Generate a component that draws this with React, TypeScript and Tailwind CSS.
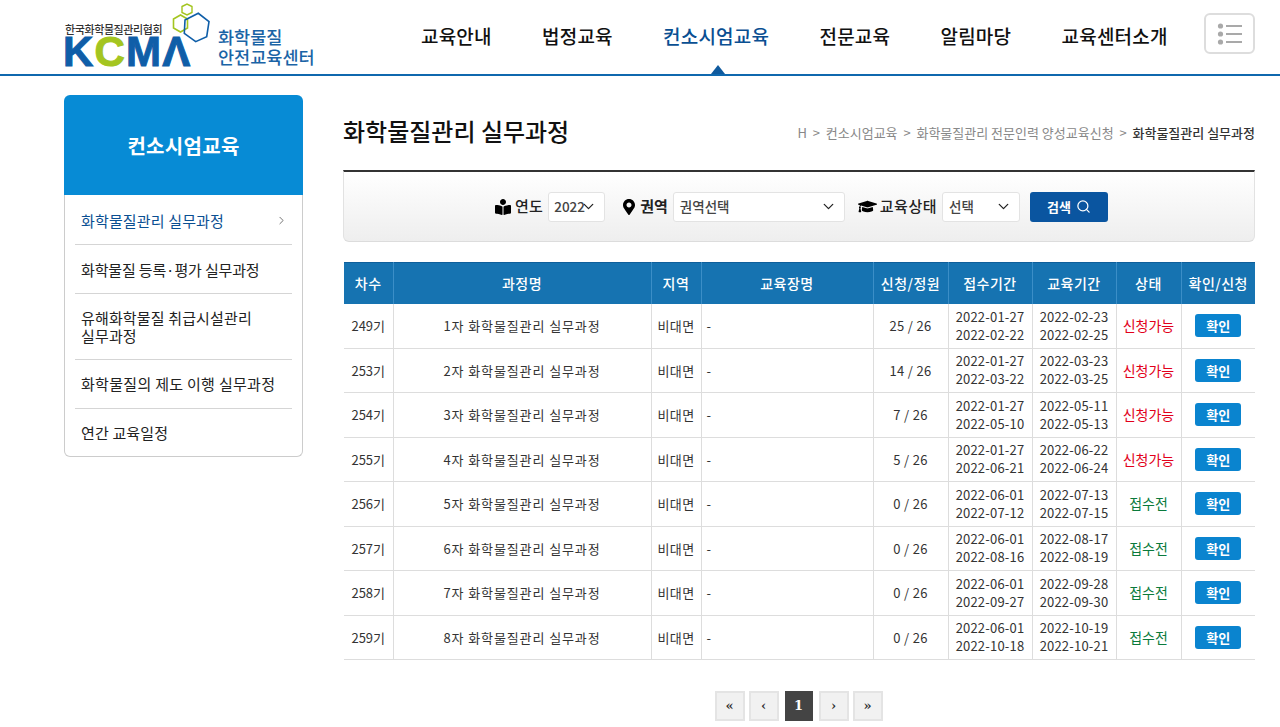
import { ChevronDown, ChevronRight, Search } from "lucide-react";
import { FaBookReader, FaGraduationCap, FaMapMarkerAlt } from "react-icons/fa";

const menu = ["교육안내", "법정교육", "컨소시엄교육", "전문교육", "알림마당", "교육센터소개"];

const sideMenu = [
  { label: "화학물질관리 실무과정", cls: "h-[50px] pt-[2px] tracking-[0.15px] text-[#0a4f92]" },
  { label: "화학물질 등록·평가 실무과정", cls: "h-[49px] pt-[2px] tracking-[-0.15px] text-[#222]" },
  { label: "유해화학물질 취급시설관리\n실무과정", cls: "h-[66px] tracking-[0.15px] text-[#222]" },
  { label: "화학물질의 제도 이행 실무과정", cls: "h-[49px] tracking-[0.3px] text-[#222]" },
  { label: "연간 교육일정", cls: "h-[48px] tracking-[0.15px] text-[#222]" },
];

const rows = [
  ["249기", "1자 화학물질관리 실무과정", "25 / 26", "2022-01-27", "2022-02-22", "2022-02-23", "2022-02-25", "신청가능"],
  ["253기", "2자 화학물질관리 실무과정", "14 / 26", "2022-01-27", "2022-03-22", "2022-03-23", "2022-03-25", "신청가능"],
  ["254기", "3자 화학물질관리 실무과정", "7 / 26", "2022-01-27", "2022-05-10", "2022-05-11", "2022-05-13", "신청가능"],
  ["255기", "4자 화학물질관리 실무과정", "5 / 26", "2022-01-27", "2022-06-21", "2022-06-22", "2022-06-24", "신청가능"],
  ["256기", "5자 화학물질관리 실무과정", "0 / 26", "2022-06-01", "2022-07-12", "2022-07-13", "2022-07-15", "접수전"],
  ["257기", "6자 화학물질관리 실무과정", "0 / 26", "2022-06-01", "2022-08-16", "2022-08-17", "2022-08-19", "접수전"],
  ["258기", "7자 화학물질관리 실무과정", "0 / 26", "2022-06-01", "2022-09-27", "2022-09-28", "2022-09-30", "접수전"],
  ["259기", "8자 화학물질관리 실무과정", "0 / 26", "2022-06-01", "2022-10-18", "2022-10-19", "2022-10-21", "접수전"],
];

const columns = [
  { label: "차수", width: "w-[49px]" },
  { label: "과정명", width: "w-[258px]" },
  { label: "지역", width: "w-[50px]" },
  { label: "교육장명", width: "w-[172px]" },
  { label: "신청/정원", width: "w-[75px]" },
  { label: "접수기간", width: "w-[84px]" },
  { label: "교육기간", width: "w-[84px]" },
  { label: "상태", width: "w-[65px]" },
  { label: "확인/신청", width: "w-[74px]" },
];

function Logo() {
  return (
    <div className="relative w-[260px] h-[74px] shrink-0 flex">
      <div className="w-[153px] pt-[22px]">
        <div className="text-[11px] leading-[14px] font-medium text-[#333] tracking-[-0.4px]">한국화학물질관리협회</div>
        <div className="-ml-[2px] text-[42px] leading-[32px] font-bold text-[#0f5ea8] tracking-[1.2px] [-webkit-text-stroke:1px_currentColor] [font-family:'Liberation_Sans',sans-serif]">
          K<span className="text-[#a4c520]">C</span>MΛ
        </div>
      </div>
      <svg className="absolute left-[105px] top-0" width="50" height="46" viewBox="0 0 50 46" fill="none">
        <path d="M3.5 19 L10.5 15 L17.5 19 V28 L10.5 32 L3.5 28 Z" stroke="#a4c520" strokeWidth="1.6" />
        <path d="M12 6.5 L17 4 L22 6.5 V12.5 L17 15 L12 12.5 Z" stroke="#a4c520" strokeWidth="1.4" />
        <path d="M15 20 L28.3 13.3 L39 21.7 L36.7 36.7 L25.7 41.7 L14.3 33.3 Z" stroke="#0f5ea8" strokeWidth="1.6" />
      </svg>
      <div className="pt-[27px] text-[17.5px] leading-[20px] font-medium text-[#1a64a6]">
        화학물질
        <br />
        안전교육센터
      </div>
    </div>
  );
}

function Header() {
  return (
    <header className="relative h-[76px] border-b-2 border-[#0f68ae] flex items-center pl-[65px]">
      <Logo />
      <nav className="flex gap-[50.3px] ml-[96px] pb-[2px]">
        {menu.map((m, i) => (
          <a key={m} className={`text-[19px] leading-[26px] font-medium tracking-[0.2px] ${i === 2 ? "text-[#0a4f92]" : "text-[#111]"}`}>
            {m}
          </a>
        ))}
      </nav>
      <button className="absolute left-[1204px] top-[13px] w-[51px] h-[41px] rounded-md border-2 border-[#ddd] flex items-center justify-center">
        <svg width="26" height="22" viewBox="0 0 26 22" fill="#a9a9a9">
          <circle cx="3.5" cy="3" r="2.6" />
          <circle cx="3.5" cy="11" r="2.6" />
          <circle cx="3.5" cy="19" r="2.6" />
          <rect x="9" y="2" width="16" height="2" />
          <rect x="9" y="10" width="16" height="2" />
          <rect x="9" y="18" width="16" height="2" />
        </svg>
      </button>
      <span className="absolute left-[711px] bottom-0 w-0 h-0 border-x-[7px] border-x-transparent border-b-[9px] border-b-[#0f5a9e]" />
    </header>
  );
}

function Sidebar() {
  return (
    <aside className="w-[239px] shrink-0 h-[362px]">
      <div className="h-[100px] pt-[2px] rounded-t-md bg-[#078bd5] flex items-center justify-center text-white text-[20px] font-bold tracking-[0.3px]">컨소시엄교육</div>
      <ul className="h-[262px] px-[10px] rounded-b-md border border-t-0 border-[#ccc]">
        {sideMenu.map((s, i) => (
          <li
            key={s.label}
            className={`flex items-center justify-between pl-[6px] pr-[4px] whitespace-pre-line text-[15px] leading-[18px] border-[#d5d5d5] ${i < 4 ? "border-b" : ""} ${s.cls}`}
          >
            <span>{s.label}</span>
            {i === 0 && <ChevronRight size={13} strokeWidth={1.5} className="text-[#555]" />}
          </li>
        ))}
      </ul>
    </aside>
  );
}

function SelectBox({ value, className }: { value: string; className: string }) {
  return (
    <div className={`h-[30px] rounded-[3px] border border-[#e3e3e3] bg-white flex items-center justify-between text-[13.5px] text-[#444] ${className}`}>
      <span>{value}</span>
      <ChevronDown size={17} strokeWidth={1.8} className="text-[#222] shrink-0 -ml-[5px]" />
    </div>
  );
}

function SearchBar() {
  return (
    <div className="h-[72px] border-t-2 border-[#333] border-x border-b border-x-[#e2e2e2] border-b-[#dcdcdc] rounded-b-md bg-gradient-to-b from-white to-[#eeeeee] flex items-center justify-center pl-[5px] text-[15px] font-medium text-[#222]">
      <FaBookReader size={16} className="text-black" />
      <span className="ml-[4px] tracking-[0.3px]">연도</span>
      <SelectBox value="2022" className="ml-[5px] w-[57px] pl-[5px] pr-[8px]" />
      <FaMapMarkerAlt size={16} className="ml-[16px] text-black" />
      <span className="ml-[3px] font-bold">권역</span>
      <SelectBox value="권역선택" className="ml-[5px] w-[172px] pl-[6px] pr-[7px]" />
      <FaGraduationCap size={19} className="ml-[13px] text-black" />
      <span className="ml-[3px] tracking-[0.5px]">교육상태</span>
      <SelectBox value="선택" className="ml-[5px] w-[78px] pl-[6px] pr-[7px]" />
      <button className="ml-[10px] w-[78px] h-[30px] rounded-[3px] bg-[#0a55a0] text-white text-[13px] font-bold flex items-center justify-center gap-[5px]">
        검색
        <Search size={15} strokeWidth={2} />
      </button>
    </div>
  );
}

function CourseTable() {
  return (
    <table className="mt-[20px] ml-px w-[911px] table-fixed border-collapse text-[13px] text-[#333]">
      <thead>
        <tr className="h-[41px] bg-[#1673b1] border-t border-[#0f5f9b]">
          {columns.map((c, i) => (
            <th key={c.label} className={`${c.width} font-medium text-white text-[14px] tracking-[0.5px] p-0 ${i < 8 ? "border-r border-[#3b8ec7]" : ""}`}>
              {c.label}
            </th>
          ))}
        </tr>
      </thead>
      <tbody>
        {rows.map((r) => (
          <tr key={r[0]} className="h-[44.5px] border-b border-[#ddd] text-center">
            <td className="border-r border-[#ddd] text-[13px] p-0">{r[0]}</td>
            <td className="border-r border-[#ddd] tracking-[0.9px] p-0">{r[1]}</td>
            <td className="border-r border-[#ddd] tracking-[0.4px] p-0">비대면</td>
            <td className="border-r border-[#ddd] text-left pl-[5px] p-0">-</td>
            <td className="border-r border-[#ddd] tracking-[0.3px] p-0">{r[2]}</td>
            <td className="border-r border-[#ddd] leading-[18px] tracking-[0.2px] p-0">
              {r[3]}
              <br />
              {r[4]}
            </td>
            <td className="border-r border-[#ddd] leading-[18px] tracking-[0.2px] p-0">
              {r[5]}
              <br />
              {r[6]}
            </td>
            <td className={`border-r border-[#ddd] text-[14px] p-0 ${r[7] === "신청가능" ? "text-[#e2001a]" : "text-[#0a7a3c]"}`}>{r[7]}</td>
            <td className="p-0">
              <button className="w-[46px] h-[23px] rounded-[3px] bg-[#0a84cf] text-white text-[13px] font-bold">확인</button>
            </td>
          </tr>
        ))}
      </tbody>
    </table>
  );
}

function Pagination() {
  const pages = ["«", "‹", "1", "›", "»"];
  return (
    <div className="flex justify-center items-center gap-[4px] mt-[31px] pr-[1px]">
      {pages.map((p) => (
        <a
          key={p}
          className={`h-[30px] flex items-center justify-center font-bold text-[13px] [font-family:'DejaVu_Serif',serif] ${
            p === "1" ? "w-[28px] mx-[2px] bg-[#444] text-white" : "w-[30px] bg-[#f1f1f1] border-2 border-[#e4e4e4] text-[#333]"
          }`}
        >
          {p}
        </a>
      ))}
    </div>
  );
}

export default function App() {
  return (
    <div className="h-[727px] overflow-hidden bg-white [font-family:'Noto_Sans_CJK_KR','Noto_Sans',sans-serif]">
      <Header />
      <main className="flex pl-[64px] pr-[25px] pt-[19px] gap-[40px]">
        <Sidebar />
        <section className="w-[912px]">
          <div className="h-[75px] flex items-start justify-between">
            <h1 className="text-[24px] leading-[34px] font-medium text-[#111] mt-[19px]">화학물질관리 실무과정</h1>
            <p className="text-[13px] leading-[18px] text-[#888] mt-[29px] whitespace-pre">
              {"H  >  컨소시엄교육  >  화학물질관리 전문인력 양성교육신청  >  "}
              <span className="text-[#333] font-medium">화학물질관리 실무과정</span>
            </p>
          </div>
          <SearchBar />
          <CourseTable />
          <Pagination />
        </section>
      </main>
    </div>
  );
}
